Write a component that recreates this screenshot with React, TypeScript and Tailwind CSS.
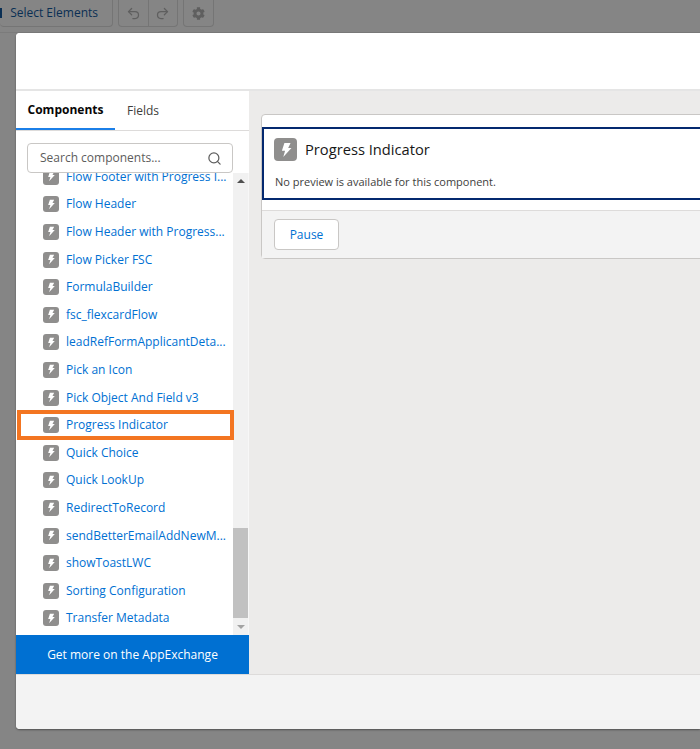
import { Undo2, Redo2, Search } from 'lucide-react';
import { FaCog } from 'react-icons/fa';

const components = [
  'Flow Footer with Progress I...',
  'Flow Header',
  'Flow Header with Progress...',
  'Flow Picker FSC',
  'FormulaBuilder',
  'fsc_flexcardFlow',
  'leadRefFormApplicantDeta...',
  'Pick an Icon',
  'Pick Object And Field v3',
  'Progress Indicator',
  'Quick Choice',
  'Quick LookUp',
  'RedirectToRecord',
  'sendBetterEmailAddNewM...',
  'showToastLWC',
  'Sorting Configuration',
  'Transfer Metadata',
];

function BoltIcon({ size }: { size: 'sm' | 'lg' }) {
  return (
    <span
      className={
        size === 'sm'
          ? 'flex h-4 w-4 shrink-0 items-center justify-center rounded-[3px] bg-[#8f8e8d]'
          : 'flex h-[23px] w-[23px] shrink-0 items-center justify-center rounded-[4px] bg-[#8f8e8d]'
      }
    >
      <svg viewBox="0 0 12 14" className={size === 'sm' ? 'h-[11px] w-[10px]' : 'h-4 w-[14px]'}>
        <path d="M4.6 0.8H10L7.9 5.2H10.8L3.6 13.2L5.2 7.6H2.4Z" fill="#fff" />
      </svg>
    </span>
  );
}

export default function App() {
  return (
    <div className="flex h-[749px] w-[700px] flex-col overflow-hidden bg-[#858585] font-['Open_Sans','Noto_Sans',sans-serif]">
      {/* Toolbar behind the overlay */}
      <div className="flex h-[33px] shrink-0 items-start gap-[5px] border-b border-[#7b7b7b]">
        <div className="flex h-[27px] w-[113px] items-center justify-between rounded-b-[4px] border border-l-0 border-t-0 border-[#757575] pr-[14px] text-[12px] text-[#0a2f54]">
          <span className="h-[10px] w-[2px] bg-[#0a2f54]" />
          <span>Select Elements</span>
        </div>
        <div className="flex h-[27px] w-[60px] rounded-b-[4px] border border-t-0 border-[#757575]">
          <span className="flex flex-1 items-center justify-center border-r border-[#757575]">
            <Undo2 size={15} color="#5f5f5f" />
          </span>
          <span className="flex flex-1 items-center justify-center">
            <Redo2 size={15} color="#5f5f5f" />
          </span>
        </div>
        <div className="flex h-[27px] w-[31px] items-center justify-center rounded-b-[4px] border border-t-0 border-[#757575]">
          <FaCog size={13} color="#5f5f5f" />
        </div>
      </div>

      {/* Modal */}
      <div className="ml-4 flex h-[696px] flex-col overflow-hidden rounded-l-[4px] bg-white shadow-[0_1px_2px_rgba(0,0,0,0.4)]">
        <div className="h-[58px] shrink-0 border-b-2 border-[#e5e5e5] bg-white" />

        <div className="flex h-[583px] shrink-0">
          {/* Sidebar */}
          <div className="flex w-[233px] shrink-0 flex-col">
            <div className="flex h-[40px] shrink-0 border-b border-[#dddbda] text-[12px]">
              <div className="flex h-[39px] w-[99px] items-center justify-center border-b-2 border-[#1b7fe8] pt-[1px] font-bold text-[#080707]">
                Components
              </div>
              <div className="flex h-[39px] items-center pl-3 pt-[1px] text-[#3e3e3c]">Fields</div>
            </div>

            <div className="relative z-20 mx-[11px] mt-3 flex h-[30px] w-[206px] shrink-0 items-center justify-between rounded-[4px] border border-[#c9c7c5] bg-white pl-3 pr-[10px] text-[12px] text-[#5c5c5c]">
              <span>Search components...</span>
              <Search size={15} color="#5f5f5f" />
            </div>

            <div className="flex min-h-0 flex-1">
              <div className="-mt-[10px] flex-1">
                <div className="flex flex-col">
                  {components.map((name) => (
                    <div
                      key={name}
                      className="relative flex h-[27.6px] items-center gap-[7px] pl-[27px] text-[12px] text-[#0070d2]"
                    >
                      <BoltIcon size="sm" />
                      <span className="whitespace-nowrap">{name}</span>
                      {name === 'Progress Indicator' && (
                        <span className="absolute -bottom-[1px] left-[1px] top-[-1px] z-10 w-[217px] border-[4px] border-[#f37521]" />
                      )}
                    </div>
                  ))}
                </div>
              </div>

              {/* Scrollbar */}
              <div className="flex w-4 shrink-0 flex-col items-center border-r border-[#f7f7f7] bg-[#f1f1f1]">
                <div className="flex h-[15px] w-full shrink-0 items-center justify-center">
                  <span className="h-0 w-0 border-x-[4px] border-b-[4px] border-x-transparent border-b-[#505050]" />
                </div>
                <div className="mt-[340px] w-full flex-1 bg-[#c1c1c1]" />
                <div className="flex h-[17px] w-full shrink-0 items-center justify-center">
                  <span className="h-0 w-0 border-x-[4px] border-t-[4px] border-x-transparent border-t-[#a3a3a3]" />
                </div>
              </div>
            </div>

            <div className="flex h-[39px] shrink-0 items-center justify-center bg-[#0070d2] text-[12px] text-white">
              Get more on the AppExchange
            </div>
          </div>

          {/* Canvas */}
          <div className="flex-1 overflow-hidden bg-[#ecebea] pl-3 pt-[23px]">
            <div className="h-[145px] w-[600px] rounded-l-[4px] border border-[#c9c7c5] bg-white">
              <div className="h-[12px]" />
              <div className="h-[73px] border-y-2 border-l-2 border-[#04296f] bg-white pl-[10px] pt-[9px]">
                <div className="flex items-center gap-2">
                  <BoltIcon size="lg" />
                  <span className="text-[14.7px] text-[#181818]">Progress Indicator</span>
                </div>
                <div className="ml-[1px] mt-[13px] text-[11px] text-[#3e3e3c]">
                  No preview is available for this component.
                </div>
              </div>
              <div className="mt-[10px] h-[48px] border-t border-[#dddbda] bg-[#f3f3f3] pl-3 pt-2">
                <div className="flex h-[31px] w-[65px] items-center justify-center rounded-[4px] border border-[#c9c7c5] bg-white text-[12px] text-[#0070d2]">
                  Pause
                </div>
              </div>
            </div>
          </div>
        </div>

        <div className="flex-1 border-t border-[#dddbda] bg-[#f3f3f3]" />
      </div>
    </div>
  );
}
